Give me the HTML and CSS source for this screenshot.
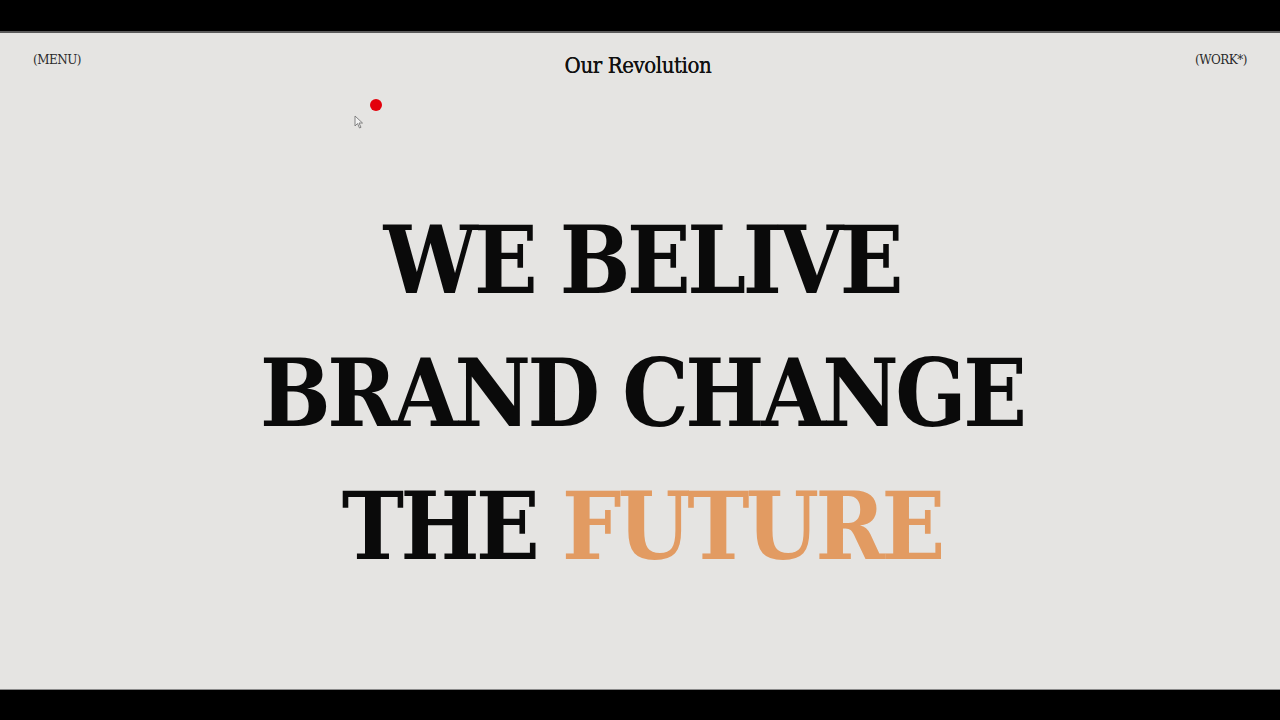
FILE: index.html
```html
<!DOCTYPE html>
<html>
<head>
<meta charset="utf-8">
<link rel="stylesheet" href="styles.css">
</head>
<body>
<div class="frame">
  <div class="bar top"></div>
  <main class="page">
    <header class="nav">
      <span class="nav-link">(MENU)</span>
      <span class="title">Our Revolution</span>
      <span class="nav-link">(WORK*)</span>
    </header>
    <span class="dot"></span>
    <svg class="cursor" width="10" height="14" viewBox="0 0 10 14"><path d="M1 1 L1 11 L3.5 8.5 L5.5 13 L7 12.3 L5 8 L8.5 8 Z" fill="#f2f2f2" stroke="#777" stroke-width="0.9"/></svg>
    <section class="hero">
      <h1 class="headline">
        <span class="line">WE BELIVE</span>
        <span class="line">BRAND CHANGE</span>
        <span class="line">THE <span class="accent">FUTURE</span></span>
      </h1>
    </section>
  </main>
  <div class="bar bottom"></div>
</div>
</body>
</html>
```
FILE: styles.css
```css
html, body {
  margin: 0;
  padding: 0;
  background: #000;
}
.frame {
  width: 1280px;
  height: 720px;
  display: flex;
  flex-direction: column;
  overflow: hidden;
}
.bar {
  background: #000;
}
.bar.top {
  height: 31px;
  border-bottom: 2px solid #5a5a5a;
}
.bar.bottom {
  height: 30px;
  border-top: 1px solid #8a8a8a;
}
.page {
  flex: 1;
  background: #e5e4e2;
  position: relative;
  display: flex;
  flex-direction: column;
}
.nav {
  display: flex;
  justify-content: space-between;
  align-items: flex-start;
  padding: 19px 33px 0 33px;
  font-family: "DejaVu Serif", serif;
}
.nav-link {
  font-size: 12px;
  color: #2a2a2a;
  letter-spacing: -0.5px;
  padding-top: 1px;
}
.title {
  font-family: "DejaVu Serif Condensed", "DejaVu Serif", serif;
  font-size: 22px;
  color: #111;
  padding-top: 1px;
  letter-spacing: -0.4px;
  text-shadow: 0 0 0.4px #111;
}
.dot {
  position: absolute;
  left: 370px;
  top: 66px;
  width: 12px;
  height: 12px;
  border-radius: 50%;
  background: #e3000b;
}
.cursor {
  position: absolute;
  left: 354px;
  top: 82px;
}
.hero {
  flex: 1;
  display: flex;
  justify-content: center;
  padding-top: 116px;
}
.headline {
  margin: 0;
  font-family: "DejaVu Serif Condensed", "DejaVu Serif", serif;
  font-weight: bold;
  font-size: 93px;
  line-height: 133px;
  letter-spacing: -3.5px;
  color: #0a0a0a;
  text-align: center;
  display: flex;
  flex-direction: column;
  align-items: center;
}
.line {
  display: block;
  white-space: nowrap;
  margin-right: -3.5px;
}
.accent {
  color: #e29b62;
}
```
